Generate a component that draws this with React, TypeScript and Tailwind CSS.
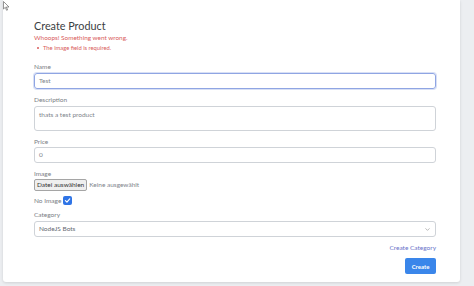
import { ChevronDown } from "lucide-react"

const font = { fontFamily: "Lato, 'Open Sans', sans-serif" }

const Label = ({ children, className = "" }: { children: string; className?: string }) => (
  <label className={`block text-[6.5px] leading-[8px] text-[#7a7e85] ${className}`}>{children}</label>
)

export default function App() {
  return (
    <div className="relative w-[474px] h-[286px] bg-[#eceef1] overflow-hidden" style={font}>
      {/* mouse cursor */}
      <svg className="absolute left-[3px] top-[1px]" width="7" height="10" viewBox="0 0 7 10">
        <path d="M0.5 0.5 L0.5 8 L2.3 6.3 L3.6 9.3 L4.6 8.9 L3.4 6 L6 6 Z" fill="#fff" stroke="#666" strokeWidth="0.7" />
      </svg>

      <div className="ml-[3px] w-[457px] h-[282px] bg-white rounded-b-[3px] shadow-[0_1px_3px_rgba(0,0,0,0.12)] pl-[31px] pr-[24px] pt-[19px] flex flex-col">
        <h1 className="text-[10.8px] leading-[14px] text-[#3a3d42]">Create Product</h1>
        <p className="text-[6.4px] leading-[9px] text-[#d85a5a]">Whoops! Something went wrong.</p>
        <ul className="mt-[2px] pl-[3px]">
          <li className="flex items-center text-[5.8px] leading-[8px] text-[#d85a5a]">
            <span className="w-[2px] h-[2px] rounded-full bg-[#d85a5a] mr-[4px]" />
            The image field is required.
          </li>
        </ul>

        <Label className="mt-[11px]">Name</Label>
        <div className="mt-[2px] h-[16px] rounded-[3px] border border-[#8fa5e3] shadow-[0_0_0_1px_rgba(143,165,227,0.35)] flex items-center px-[4px] text-[6.5px] text-[#80858c]">
          Test
        </div>

        <Label className="mt-[7px]">Description</Label>
        <div className="mt-[2px] h-[25px] rounded-[3px] border border-[#cfd3d8] px-[4px] pt-[3px] text-[6.5px] leading-[9px] text-[#80858c]">
          thats a test product
        </div>

        <Label className="mt-[7px]">Price</Label>
        <div className="mt-[1px] h-[16px] rounded-[3px] border border-[#cfd3d8] flex items-center px-[4px] text-[6.5px] text-[#80858c]">
          0
        </div>

        <Label className="mt-[7px]">Image</Label>
        <div className="mt-[1px] h-[12px] flex items-center text-[6.5px]">
          <span className="h-full flex items-center px-[2px] bg-[#efefef] border border-[#a5a5a5] rounded-[2px] text-[#333]">
            Datei auswählen
          </span>
          <span className="ml-[2px] text-[#80858c]">Keine ausgewählt</span>
        </div>

        <div className="mt-[5px] h-[9px] flex items-center text-[6.5px] text-[#7a7e85]">
          No Image
          <span className="ml-[2px] w-[9px] h-[9px] rounded-[2px] bg-[#2f74e6] flex items-center justify-center">
            <svg width="7" height="7" viewBox="0 0 10 10">
              <path d="M2 5.2 L4.2 7.3 L8.2 2.8" fill="none" stroke="#fff" strokeWidth="1.7" strokeLinecap="round" strokeLinejoin="round" />
            </svg>
          </span>
        </div>

        <Label className="mt-[6px]">Category</Label>
        <div className="mt-[2px] h-[16px] rounded-[3px] border border-[#cfd3d8] flex items-center justify-between px-[4px] text-[6.5px] text-[#666a72]">
          NodeJS Bots
          <ChevronDown className="w-[7px] h-[7px] text-[#888]" strokeWidth={2} />
        </div>

        <div className="mt-[7px] text-right text-[6.5px] leading-[8px] text-[#6a73c9]">Create Category</div>

        <button className="mt-[6px] self-end w-[31px] h-[16px] rounded-[2px] bg-[#3a86ea] text-white text-[6px] font-bold">
          Create
        </button>
      </div>
    </div>
  )
}
